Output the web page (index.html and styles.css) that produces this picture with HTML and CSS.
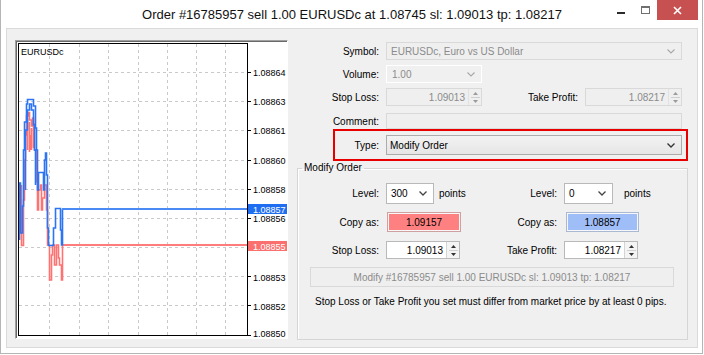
FILE: index.html
```html
<!DOCTYPE html>
<html>
<head>
<meta charset="utf-8">
<title>Order</title>
<link rel="stylesheet" href="styles.css">
</head>
<body>
<div class="window">
  <div class="titlebar">
    <div class="title">Order #16785957 sell 1.00 EURUSDc at 1.08745 sl: 1.09013 tp: 1.08217</div>
    <div class="controls">
      <span class="ctl-min"></span>
      <span class="ctl-max"></span>
      <span class="ctl-close"><svg width="9" height="9" viewBox="0 0 9 9"><path d="M1 1L8 8M8 1L1 8" stroke="#fff" stroke-width="1.6"/></svg></span>
    </div>
  </div>
  <div class="client">
    <div class="chart-panel">
      <svg class="chart" width="270" height="296" viewBox="17 42 270 296">
        <rect x="17" y="42" width="270" height="296" fill="#fff"/>
        <g stroke="#c9c9c9" stroke-dasharray="3 3" fill="none">
          <path d="M49.5 44V335M79.5 44V335M108.5 44V335M138.5 44V335M167.5 44V335M196.5 44V335M225.5 44V335"/>
          <path d="M19 72.5H247M19 101.5H247M19 130.5H247M19 160.5H247M19 189.5H247M19 218.5H247M19 247.5H247M19 276.5H247M19 305.5H247"/>
        </g>
        <g fill="none" stroke="#ff7272" stroke-width="1.6" stroke-linejoin="miter">
          <path d="M21.5 185V245.5H23.5V200H24.5V160H25.5V135H26.5V116H28.5V112.5H29.5V120H31.5V126H32.5V118H33.5V124H34.5V150H36.5V182H37.5V210H38.5V190H40.5V185H41.5V210H42.5V198H44.5V185H46.5V210H47.5V245H49.5V280H51.5V255H52.5V245H54.5V265H56.5V245H58.5V258H59.5V265H61.5V280H62.5V245"/>
          <path d="M27.5 118V150M29.5 122V152M31.5 128V150M33.5 126V148M30.5 135V150"/>
          <path d="M62 245H247" stroke-width="2" stroke="#ff7c7c"/>
        </g>
        <g fill="none" stroke="#2b74f3" stroke-width="1.6" stroke-linejoin="miter">
          <path d="M19.5 240V183H20.5V233H22.5V206H23.5V150H24.5V122H26.5V104H27.5V99.5H33.5V106H35.5V128H36.5V150H37.5V190H38.5V172.5H43.5V190H44.5V160H45.5V153H46.5V175H47.5V228H48.5V245.5H53.5V228H55.5V208.5H60.5V230H61.5V245H62.5V209"/>
          <path d="M25.5 190V130H27.5V110H29.5V104H31.5V110H33.5V125H34.5V150H35.5V185"/>
          <path d="M62 209H247" stroke-width="2" stroke="#4a8af5"/>
        </g>
        <rect x="18.5" y="43.5" width="229" height="292" fill="none" stroke="#000"/>
        <path stroke="#000" d="M248 72.5H251M248 101.5H251M248 130.5H251M248 160.5H251M248 189.5H251M248 218.5H251M248 247.5H251M248 276.5H251M248 305.5H251M248 335.5H251"/>
        <g class="axis">
          <text x="21" y="55">EURUSDc</text>
          <text x="253" y="76">1.08864</text>
          <text x="253" y="105">1.08863</text>
          <text x="253" y="134">1.08861</text>
          <text x="253" y="163.5">1.08860</text>
          <text x="253" y="192.5">1.08858</text>
          <text x="253" y="222">1.08856</text>
          <text x="253" y="280.5">1.08853</text>
          <text x="253" y="309.5">1.08852</text>
          <text x="253" y="336.5">1.08850</text>
        </g>
        <rect x="248" y="204" width="39" height="10" fill="#1f6ef2"/>
        <text class="tag" x="253" y="212.5">1.08857</text>
        <rect x="248" y="241" width="39" height="10" fill="#fb6f6f"/>
        <text class="tag" x="253" y="249.5">1.08855</text>
      </svg>
    </div>

    <div class="form">
      <div class="row h18">
        <span class="lbl w82">Symbol:</span>
        <div class="combo dis w296"><span class="val">EURUSDc, Euro vs US Dollar</span><svg class="chev" width="8" height="5" viewBox="0 0 8 5"><path d="M0.5 0.5L4 4L7.5 0.5" fill="none" stroke="currentColor" stroke-width="1.1"/></svg></div>
      </div>
      <div class="row h18 mt5">
        <span class="lbl w82">Volume:</span>
        <div class="combo vol w96"><span class="val">1.00</span><svg class="chev" width="8" height="5" viewBox="0 0 8 5"><path d="M0.5 0.5L4 4L7.5 0.5" fill="none" stroke="currentColor" stroke-width="1.1"/></svg></div>
      </div>
      <div class="row h18 mt5">
        <span class="lbl w82">Stop Loss:</span>
        <div class="spin dis w96"><span class="num">1.09013</span><span class="arrows"><svg width="5" height="3" viewBox="0 0 5 3"><path d="M0 3L2.5 0L5 3Z" fill="currentColor"/></svg><i></i><svg width="5" height="3" viewBox="0 0 5 3"><path d="M0 0L2.5 3L5 0Z" fill="currentColor"/></svg></span></div>
        <span class="lbl w96">Take Profit:</span>
        <div class="spin dis w97 ml6"><span class="num">1.08217</span><span class="arrows"><svg width="5" height="3" viewBox="0 0 5 3"><path d="M0 3L2.5 0L5 3Z" fill="currentColor"/></svg><i></i><svg width="5" height="3" viewBox="0 0 5 3"><path d="M0 0L2.5 3L5 0Z" fill="currentColor"/></svg></span></div>
      </div>
      <div class="row h16 mt7">
        <span class="lbl w82">Comment:</span>
        <div class="edit dis w296"></div>
      </div>
      <div class="highlight">
        <span class="lbl w44">Type:</span>
        <div class="combo act w296"><span class="val">Modify Order</span><svg class="chev" width="8" height="5" viewBox="0 0 8 5"><path d="M0.5 0.5L4 4L7.5 0.5" fill="none" stroke="currentColor" stroke-width="1.3"/></svg></div>
      </div>

      <fieldset class="group">
        <legend>Modify Order</legend>
        <div class="grow h21">
          <div class="half1">
            <span class="lbl w81">Level:</span>
            <div class="combo white w48 ml7"><span class="val">300</span><svg class="chev" width="8" height="5" viewBox="0 0 8 5"><path d="M0.5 0.5L4 4L7.5 0.5" fill="none" stroke="currentColor" stroke-width="1.3"/></svg></div>
            <span class="unit ml5">points</span>
          </div>
          <div class="half2">
            <span class="lbl w80">Level:</span>
            <div class="combo white w49 ml7"><span class="val">0</span><svg class="chev" width="8" height="5" viewBox="0 0 8 5"><path d="M0.5 0.5L4 4L7.5 0.5" fill="none" stroke="currentColor" stroke-width="1.3"/></svg></div>
            <span class="unit ml11">points</span>
          </div>
        </div>
        <div class="grow h20 mt8">
          <div class="half1">
            <span class="lbl w81">Copy as:</span>
            <button class="copy red w74 ml8">1.09157</button>
          </div>
          <div class="half2">
            <span class="lbl w80">Copy as:</span>
            <button class="copy blue w73 ml9">1.08857</button>
          </div>
        </div>
        <div class="grow h18 mt9">
          <div class="half1">
            <span class="lbl w81">Stop Loss:</span>
            <div class="spin white w74 ml7"><span class="num">1.09013</span><span class="arrows"><svg width="5" height="3" viewBox="0 0 5 3"><path d="M0 3L2.5 0L5 3Z" fill="currentColor"/></svg><i></i><svg width="5" height="3" viewBox="0 0 5 3"><path d="M0 0L2.5 3L5 0Z" fill="currentColor"/></svg></span></div>
          </div>
          <div class="half2">
            <span class="lbl w80">Take Profit:</span>
            <div class="spin white w74 ml7"><span class="num">1.08217</span><span class="arrows"><svg width="5" height="3" viewBox="0 0 5 3"><path d="M0 3L2.5 0L5 3Z" fill="currentColor"/></svg><i></i><svg width="5" height="3" viewBox="0 0 5 3"><path d="M0 0L2.5 3L5 0Z" fill="currentColor"/></svg></span></div>
          </div>
        </div>
        <div class="summary">Modify #16785957 sell 1.00 EURUSDc sl: 1.09013 tp: 1.08217</div>
        <p class="note">Stop Loss or Take Profit you set must differ from market price by at least 0 pips.</p>
      </fieldset>
    </div>
  </div>
</div>
</body>
</html>
```

FILE: styles.css
```css
* { box-sizing: border-box; }

body {
  margin: 0;
  background: #fff;
  font-family: "Liberation Sans", Arial, sans-serif;
  font-size: 10px;
  color: #000;
}

.window {
  width: 703px;
  height: 354px;
  border: 1px solid #b5b5b5;
  border-top: 0;
  background: #fff;
  padding: 0 4px 5px 5px;
  display: flex;
  flex-direction: column;
}

.titlebar {
  position: relative;
  height: 28px;
  flex: none;
  display: flex;
  align-items: center;
  justify-content: center;
}

.title {
  font-size: 13px;
  color: #111;
  padding-top: 1px;
}

.controls {
  position: absolute;
  top: 0;
  right: 0;
  display: flex;
  align-items: flex-start;
}

.ctl-min {
  width: 8px;
  height: 2px;
  margin-top: 12px;
  margin-right: 16px;
  background: #2b2b2b;
}

.ctl-max {
  width: 9px;
  height: 8px;
  margin-top: 6px;
  margin-right: 7px;
  border: 1px solid #707070;
  border-top-width: 2px;
}

.ctl-close {
  width: 41px;
  height: 20px;
  background: #c75050;
  display: flex;
  align-items: center;
  justify-content: center;
}

.client {
  flex: 1;
  display: flex;
  align-items: flex-start;
  padding: 11px 0 0 8px;
  border: 1px solid #dadada;
  background: #f0f0f0;
}

.chart-panel {
  flex: none;
  width: 273px;
  height: 299px;
  border: 1px solid;
  border-color: #a0a0a0 #ffffff #ffffff #a0a0a0;
  padding: 1px 0 0 1px;
  background: #696969;
}

.chart {
  display: block;
}

.axis text, .tag {
  font-family: "Liberation Sans", Arial, sans-serif;
  font-size: 9px;
}
.axis text { fill: #000; }
.tag { fill: #fff; }

.form {
  flex: none;
  width: 391px;
  margin-left: 9px;
  margin-top: 2px;
}

.row {
  display: flex;
  align-items: center;
}

.h16 { height: 16px; }
.h18 { height: 18px; }
.h20 { height: 20px; }
.h21 { height: 21px; }
.mt5 { margin-top: 5px; }
.mt7 { margin-top: 7px; }
.mt8 { margin-top: 8px; }
.mt9 { margin-top: 9px; }
.ml5 { margin-left: 5px; }
.ml6 { margin-left: 6px; }
.ml7 { margin-left: 7px; }
.ml8 { margin-left: 8px; }
.ml9 { margin-left: 9px; }
.ml11 { margin-left: 11px; }

.lbl {
  flex: none;
  text-align: right;
  white-space: nowrap;
}
.form > .row > .lbl + * { margin-left: 7px; }
.form > .row > .lbl.w96 { margin-left: 0; }
.w44 { width: 44px; }
.w48 { width: 48px; }
.w49 { width: 49px; }
.w73 { width: 73px; }
.w74 { width: 74px; }
.w80 { width: 80px; }
.w81 { width: 81px; }
.w82 { width: 82px; }
.w96 { width: 96px; }
.w97 { width: 97px; }
.w296 { width: 296px; }

/* combobox */
.combo {
  flex: none;
  height: 100%;
  display: flex;
  align-items: center;
  justify-content: space-between;
  padding: 0 6px 0 4px;
  border: 1px solid #acacac;
}
.combo .val { white-space: nowrap; }
.chev { display: block; flex: none; }

.combo.dis {
  background: #efefef;
  border-color: #d9d9d9;
  color: #8b8b8b;
}
.combo.dis .chev { color: #a8a8a8; }

.combo.vol {
  background: #f0f0f0;
  border-color: #fff;
  color: #8b8b8b;
  padding-left: 5px;
}
.combo.vol .chev { color: #a8a8a8; }

.combo.act {
  height: 20px;
  background: linear-gradient(#f2f2f2, #e6e6e6);
  border-color: #acacac;
  color: #000;
  padding-left: 3px;
}
.combo.act .chev { color: #333; }

.combo.white {
  background: #fff;
  border-color: #b9b9b9;
  padding-left: 4px;
  padding-right: 6px;
}
.combo.white .chev { color: #444; }

/* edit */
.edit {
  flex: none;
  height: 100%;
  border: 1px solid #d9d9d9;
  background: #efefef;
}

/* spin */
.spin {
  flex: none;
  height: 100%;
  display: flex;
  align-items: stretch;
  border: 1px solid #acacac;
}
.spin .num {
  flex: 1;
  text-align: right;
  padding-right: 3px;
  display: flex;
  align-items: center;
  justify-content: flex-end;
}
.spin .arrows {
  flex: none;
  width: 13px;
  display: flex;
  flex-direction: column;
  align-items: center;
  justify-content: center;
  gap: 1px;
  border-left: 1px solid #d4d4d4;
}
.spin .arrows svg { display: block; }
.spin .arrows i {
  display: block;
  width: 9px;
  height: 1px;
  background: #cfcfcf;
  margin: 1px 0;
}
.spin.dis {
  background: #efefef;
  border-color: #d9d9d9;
  color: #8b8b8b;
}
.spin.dis .arrows { color: #9a9a9a; border-left-color: #e2e2e2; }
.spin.white {
  background: #fff;
  border-color: #b9b9b9;
}
.spin.white .arrows { color: #333; background: #f4f4f4; }

/* highlighted type row */
.highlight {
  display: flex;
  align-items: center;
  height: 32px;
  margin-left: 36px;
  border: 2px solid #e80000;
  padding: 4px 0;
}
.highlight .combo { margin-left: 7px; }

/* group */
.group {
  margin: 1px 0 0;
  padding: 9px 0 0;
  width: 391px;
  height: 178px;
  border: 1px solid #d5d5d5;
  box-shadow: inset 1px 1px 0 #fff;
  min-width: 0;
}
.group legend {
  margin-left: 4px;
  padding: 0 2px;
  line-height: 12px;
  font-size: 10px;
}

.grow {
  display: flex;
}
.half1, .half2 {
  display: flex;
  align-items: center;
  height: 100%;
}
.half1 { width: 179px; flex: none; }
.half2 { flex: 1; }

.unit { white-space: nowrap; }

.copy {
  flex: none;
  height: 100%;
  margin-top: 0;
  margin-bottom: 0;
  padding: 0;
  font-family: "Liberation Sans", Arial, sans-serif;
  font-size: 10px;
  color: #000;
  border: 1px solid #c9c9c9;
  box-shadow: inset 0 0 0 1px #f7f7f7;
}
.copy.red { background: #ff8080; border-color: #cfa0a0; }
.copy.blue { background: #9fbdf7; border-color: #a9b9d4; }

.summary {
  margin: 8px 0 0 12px;
  width: 364px;
  height: 20px;
  border: 1px solid #d9d9d9;
  background: #efefef;
  color: #8b8b8b;
  display: flex;
  align-items: center;
  justify-content: center;
  white-space: nowrap;
}

.note {
  margin: 9px 0 0 17px;
  line-height: 12px;
  white-space: nowrap;
}
```
